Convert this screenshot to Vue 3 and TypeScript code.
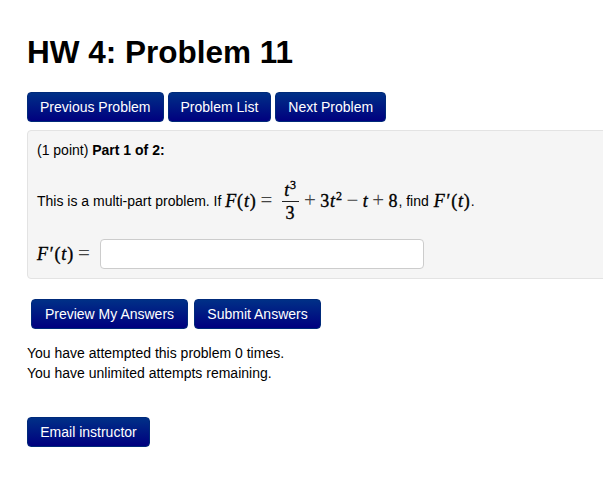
<script setup lang="ts">
const navButtons: string[] = ['Previous Problem', 'Problem List', 'Next Problem']
</script>

<template>
  <main class="page">
    <h1 class="title">HW 4: Problem 11</h1>
    <nav class="nav">
      <a v-for="label in navButtons" :key="label" class="btn">{{ label }}</a>
    </nav>
    <section class="problem">
      <p class="points">(1 point) <b>Part 1 of 2:</b></p>
      <p class="statement">
        <span>This is a multi-part problem. If&nbsp;</span>
        <span class="math"><i>F</i>(<i>t</i>)<span class="rel">=</span></span>
        <span class="frac math">
          <span class="num"><i>t</i><sup>3</sup></span>
          <span class="den">3</span>
        </span>
        <span class="math"><span class="bin">+</span>3<i>t</i><sup>2</sup><span class="bin">−</span><i>t</i><span class="bin">+</span>8</span>
        <span>, find&nbsp;</span>
        <span class="math last"><i>F</i><span class="prime">′</span>(<i>t</i>)</span>
        <span>.</span>
      </p>
      <div class="answer">
        <span class="math"><i>F</i><span class="prime">′</span>(<i>t</i>)<span class="rel">=</span></span>
        <input class="input" type="text" aria-label="answer" />
      </div>
    </section>
    <div class="actions">
      <a class="btn preview">Preview My Answers</a>
      <a class="btn submit">Submit Answers</a>
    </div>
    <p class="attempts">You have attempted this problem 0 times.<br />You have unlimited attempts remaining.</p>
    <a class="btn email">Email instructor</a>
  </main>
</template>

<style scoped>
.page {
  box-sizing: border-box;
  width: 603px;
  height: 503px;
  padding: 32px 0 0 27px;
  overflow: hidden;
  font-family: "Liberation Sans", Arial, sans-serif;
  font-size: 14px;
  line-height: 20px;
  color: #000;
}
.title {
  margin: 0 0 19px;
  font-size: 31.5px;
  line-height: 41px;
  font-weight: 700;
}
.nav {
  display: flex;
  gap: 4px;
}
.btn {
  display: inline-block;
  box-sizing: border-box;
  height: 30px;
  padding: 4px 12px;
  border: 1px solid #002a7a;
  border-radius: 4px;
  background: linear-gradient(to bottom, #003087, #00007f);
  color: #fff;
  font-size: 14px;
  line-height: 20px;
  text-align: center;
  white-space: nowrap;
}
.preview {
  width: 157px;
}
.submit {
  width: 127px;
}
.problem {
  box-sizing: border-box;
  width: 600px;
  height: 149px;
  margin-top: 8px;
  padding: 9px;
  border: 1px solid #e3e3e3;
  border-radius: 4px;
  background: #f5f5f5;
}
.points {
  margin: 0;
  line-height: 20px;
}
.statement {
  display: flex;
  align-items: center;
  height: 46px;
  margin: 18px 0 0;
  white-space: nowrap;
}
.math {
  font-family: "Liberation Serif", "DejaVu Serif", serif;
  font-size: 18px;
  font-weight: 400;
  color: #000;
  letter-spacing: 0.8px;
  -webkit-text-stroke: 0.35px #000;
}
.math sup {
  font-size: 12px;
  line-height: 0;
}
.prime {
  margin-left: 1px;
}
.last {
  margin-left: 1px;
}
.rel {
  margin: 0 9px 0 4px;
  color: #444;
  font-size: 21px;
  line-height: 18px;
  -webkit-text-stroke: 0;
}
.answer .rel {
  margin-right: 2px;
}
.bin {
  margin: 0 3.7px;
  color: #444;
  font-size: 21px;
  line-height: 18px;
  -webkit-text-stroke: 0;
}
.frac {
  display: inline-flex;
  flex-direction: column;
  align-items: center;
  margin-right: 1.5px;
  line-height: 22px;
}
.num {
  padding: 0 2px;
  border-bottom: 1px solid #222;
}
.answer {
  display: flex;
  align-items: center;
  gap: 7px;
  margin-top: 15px;
}
.input {
  box-sizing: border-box;
  width: 324px;
  height: 30px;
  border: 1px solid #ccc;
  border-radius: 4px;
  background: #fff;
}
.actions {
  display: flex;
  gap: 6px;
  margin: 20px 0 0 4px;
}
.attempts {
  margin: 14px 0 34px;
}
.email {
  display: inline-block;
  width: 123px;
}
</style>
